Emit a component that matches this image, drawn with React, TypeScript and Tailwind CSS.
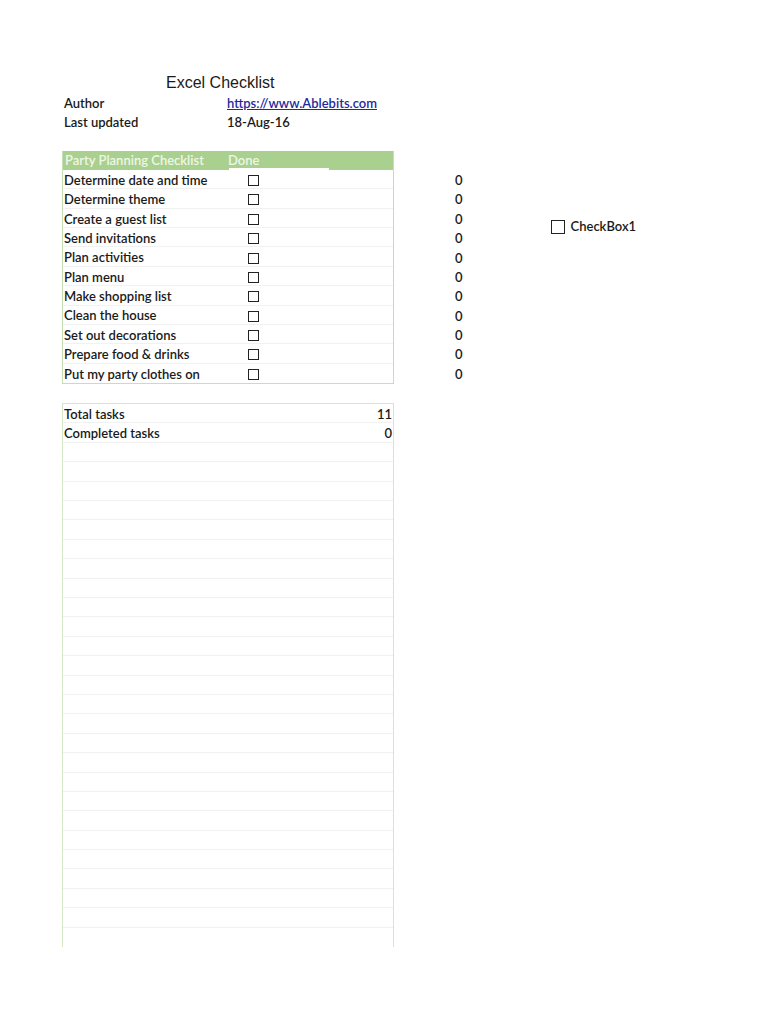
import React from "react";

const tasks = [
  "Determine date and time",
  "Determine theme",
  "Create a guest list",
  "Send invitations",
  "Plan activities",
  "Plan menu",
  "Make shopping list",
  "Clean the house",
  "Set out decorations",
  "Prepare food & drinks",
  "Put my party clothes on",
];

const Box = () => (
  <div className="w-[11px] h-[11px] border border-[#222] bg-white" />
);

export default function App() {
  const emptyRows = Array.from({ length: 26 });
  return (
    <div
      className="w-[768px] h-[1024px] bg-white text-[#1a1a1a] relative"
      style={{ fontFamily: "Lato, 'Open Sans', sans-serif" }}
    >
      <div className="pt-[72px] pl-[62px] flex">
        <div className="w-[332px]">
          <div
            className="h-[22px] text-[16px] leading-[22px] pl-[104px]"
            style={{ fontFamily: "'Liberation Sans', Arial, sans-serif" }}
          >
            Excel Checklist
          </div>
          <div className="flex h-[19.4px] items-end text-[13px] font-semibold">
            <div className="w-[165px] pl-[2px]">Author</div>
            <div className="text-[#1f2a9c] underline">https://www.Ablebits.com</div>
          </div>
          <div className="flex h-[19.4px] items-end text-[13px] font-semibold">
            <div className="w-[165px] pl-[2px]">Last updated</div>
            <div>18-Aug-16</div>
          </div>
          <div className="h-[18px]" />
          {/* checklist */}
          <div className="border-l border-r border-b border-[#c6e0b4]">
            <div className="h-[19px] bg-[#a9d08e] flex items-center text-[13px] font-semibold text-[#eef6e8] relative">
              <div className="w-[165px] pl-[2px]">Party Planning Checklist</div>
              <div>Done</div>
              <div className="absolute left-[166px] w-[100px] bottom-0 h-[2px] bg-white" />
            </div>
            {tasks.map((t, i) => (
              <div
                key={t}
                className={`h-[19.4px] pt-[3px] flex items-center text-[13px] font-semibold ${
                  i < tasks.length - 1 ? "border-b border-[#f1f1f1]" : ""
                }`}
              >
                <div className="w-[185px] pl-[1px] whitespace-nowrap">{t}</div>
                <Box />
              </div>
            ))}
          </div>
          <div className="h-[19px]" />
          {/* summary */}
          <div className="border-l border-r border-t border-[#d4e8c6]">
            <div className="h-[19.4px] pt-[2px] flex items-center justify-between text-[13px] font-semibold border-b border-[#f1f1f1] pr-[1px]">
              <div className="pl-[1px]">Total tasks</div>
              <div>11</div>
            </div>
            <div className="h-[19.4px] pt-[2px] flex items-center justify-between text-[13px] font-semibold border-b border-[#f1f1f1] pr-[1px]">
              <div className="pl-[1px]">Completed tasks</div>
              <div>0</div>
            </div>
            {emptyRows.map((_, i) => (
              <div
                key={i}
                className={`h-[19.4px] ${i < emptyRows.length - 1 ? "border-b border-[#f1f1f1]" : ""}`}
              />
            ))}
          </div>
        </div>
        {/* zeros column */}
        <div className="pt-[99px] pl-[61px] text-[13px] font-semibold">
          {tasks.map((t) => (
            <div key={t} className="h-[19.4px] flex items-center">0</div>
          ))}
        </div>
        <div className="pt-[145px] pl-[88px]">
          <div className="flex items-center gap-[6px] text-[13px] font-semibold">
            <div className="w-[14px] h-[14px] border border-[#222] bg-white" />
            <span>CheckBox1</span>
          </div>
        </div>
      </div>
    </div>
  );
}
